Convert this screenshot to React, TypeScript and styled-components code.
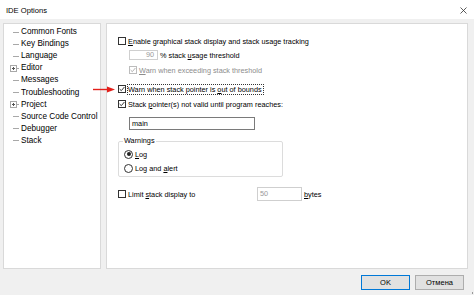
import styled, { createGlobalStyle } from "styled-components";

const GlobalStyle = createGlobalStyle`
  html, body {
    margin: 0;
    padding: 0;
  }
  body {
    background: #f0f0f0;
    font-family: "Liberation Sans", Arial, sans-serif;
    color: #000;
  }
`;

const Window = styled.div`
  position: relative;
  width: 474px;
  height: 295px;
  background: #f0f0f0;
  display: flex;
  flex-direction: column;
  overflow: hidden;
`;

const TitleBar = styled.div`
  height: 19px;
  background: #fff;
  display: flex;
  align-items: center;
  justify-content: space-between;
  padding: 1px 7px 0 6px;
  box-sizing: border-box;
  font-size: 7.6px;
`;

const Body = styled.div`
  display: flex;
  gap: 5px;
  height: 246px;
  margin-top: 4px;
  padding: 0 6px 0 3px;
`;

const Panel = styled.div<{ $width?: number }>`
  ${(p) => (p.$width ? `width: ${p.$width}px; flex: none;` : "flex: 1;")}
  background: #fff;
  border: 1px solid #d9d9d9;
  box-sizing: border-box;
`;

const TreeList = styled.ul`
  list-style: none;
  margin: 0;
  padding: 1.5px 0 0 0;
`;

const TreeItem = styled.li`
  display: flex;
  align-items: center;
  height: 12.1px;
  font-size: 8.2px;
  white-space: nowrap;
`;

const Connector = styled.span`
  position: relative;
  flex: none;
  width: 17px;
  height: 100%;
  &::after {
    content: "";
    position: absolute;
    left: 9px;
    top: 50%;
    width: 6px;
    border-top: 1px solid #a8a8a8;
  }
`;

const Expander = styled.span`
  position: absolute;
  left: 6px;
  top: 50%;
  width: 7px;
  height: 7px;
  margin-top: -3px;
  box-sizing: border-box;
  border: 1px solid #a8a8a8;
  background: #fff;
  z-index: 1;
  &::before,
  &::after {
    content: "";
    position: absolute;
    background: #555;
  }
  &::before {
    left: 1px;
    top: 2px;
    width: 3px;
    height: 1px;
  }
  &::after {
    left: 2px;
    top: 1px;
    width: 1px;
    height: 3px;
  }
`;

const Content = styled.div`
  padding: 12px 0 0 11px;
  display: flex;
  flex-direction: column;
  align-items: flex-start;
`;

const Row = styled.div<{ $top?: number; $indent?: number }>`
  display: flex;
  align-items: center;
  min-height: 10px;
  margin-top: ${(p) => p.$top ?? 0}px;
  margin-left: ${(p) => p.$indent ?? 0}px;
`;

const Box = styled.span<{ $disabled?: boolean }>`
  display: inline-flex;
  align-items: center;
  justify-content: center;
  flex: none;
  width: 8px;
  height: 8px;
  box-sizing: border-box;
  border: 1px solid ${(p) => (p.$disabled ? "#bcbcbc" : "#333")};
  background: #fff;
`;

const Radio = styled.span<{ $checked?: boolean }>`
  position: relative;
  flex: none;
  width: 9px;
  height: 9px;
  box-sizing: border-box;
  border: 1px solid #333;
  border-radius: 50%;
  background: #fff;
  &::after {
    content: "";
    display: ${(p) => (p.$checked ? "block" : "none")};
    position: absolute;
    left: 1.5px;
    top: 1.5px;
    width: 4px;
    height: 4px;
    border-radius: 50%;
    background: #222;
  }
`;

const Label = styled.span<{
  $disabled?: boolean;
  $focused?: boolean;
  $width?: number;
}>`
  font-size: 7.3px;
  line-height: 9px;
  margin-left: 2px;
  white-space: nowrap;
  color: ${(p) => (p.$disabled ? "#8d8d8d" : "#000")};
  ${(p) => p.$focused && "outline: 1px dotted #333; outline-offset: 0; padding-right: 1px;"}
  ${(p) => p.$width && `width: ${p.$width}px; flex: none;`}
`;

const U = styled.span`
  text-decoration: underline;
`;

const TextBox = styled.div<{
  $width: number;
  $height: number;
  $disabled?: boolean;
  $right?: boolean;
}>`
  flex: none;
  width: ${(p) => p.$width}px;
  height: ${(p) => p.$height}px;
  box-sizing: border-box;
  border: 1px solid ${(p) => (p.$disabled ? "#cfcfcf" : "#7a7a7a")};
  background: #fff;
  font-size: 7.3px;
  line-height: ${(p) => p.$height - 2}px;
  padding: 0 3px 0 2px;
  text-align: ${(p) => (p.$right ? "right" : "left")};
  color: ${(p) => (p.$disabled ? "#9a9a9a" : "#000")};
`;

const Group = styled.fieldset`
  width: 165px;
  box-sizing: border-box;
  margin: 6px 0 0 0;
  padding: 3px 0 3px 5px;
  min-width: 0;
  border: 1px solid #dcdcdc;
  border-radius: 2px;
`;

const Legend = styled.legend`
  font-size: 7.3px;
  line-height: 10px;
  padding: 0 1px;
  margin-left: -1px;
`;

const Footer = styled.div`
  display: flex;
  justify-content: flex-end;
  gap: 5px;
  padding: 6px 10px 0 0;
`;

const Button = styled.button<{ $default?: boolean }>`
  width: 49px;
  height: 15px;
  padding: 0;
  box-sizing: border-box;
  background: #e1e1e1;
  border: 1px solid ${(p) => (p.$default ? "#0078d7" : "#adadad")};
  font-family: "Liberation Sans", Arial, sans-serif;
  font-size: 7.5px;
  color: #000;
`;

const Arrow = styled.svg`
  position: absolute;
  left: 93px;
  top: 86px;
`;

const Grip = styled.span`
  position: absolute;
  right: 1px;
  bottom: 1px;
  width: 1px;
  height: 2px;
  background: #999;
`;

function Check({ disabled }: { disabled?: boolean }) {
  return (
    <svg width="6" height="6" viewBox="0 0 6 6">
      <polyline
        points="0.6,3 2.3,4.7 5.4,1"
        fill="none"
        stroke={disabled ? "#a8a8a8" : "#222"}
        strokeWidth="0.9"
      />
    </svg>
  );
}

const treeItems: { name: string; expandable?: boolean }[] = [
  { name: "Common Fonts" },
  { name: "Key Bindings" },
  { name: "Language" },
  { name: "Editor", expandable: true },
  { name: "Messages" },
  { name: "Troubleshooting" },
  { name: "Project", expandable: true },
  { name: "Source Code Control" },
  { name: "Debugger" },
  { name: "Stack" },
];

export default function App() {
  return (
    <Window>
      <GlobalStyle />
      <TitleBar>
        <span>IDE Options</span>
        <svg width="7" height="7" viewBox="0 0 7 7">
          <path d="M0.5 0.5 L6.5 6.5 M6.5 0.5 L0.5 6.5" stroke="#333" strokeWidth="0.8" />
        </svg>
      </TitleBar>

      <Body>
        <Panel $width={98}>
          <TreeList>
            {treeItems.map((item) => (
              <TreeItem key={item.name}>
                <Connector>{item.expandable && <Expander />}</Connector>
                {item.name}
              </TreeItem>
            ))}
          </TreeList>
        </Panel>

        <Panel>
          <Content>
            <Row>
              <Box />
              <Label>
                <U>E</U>nable graphical stack display and stack usage tracking
              </Label>
            </Row>
            <Row $top={4} $indent={11}>
              <TextBox $width={29} $height={10} $disabled $right>
                90
              </TextBox>
              <Label>
                % stack <U>u</U>sage threshold
              </Label>
            </Row>
            <Row $top={5} $indent={11}>
              <Box $disabled>
                <Check disabled />
              </Box>
              <Label $disabled>
                <U>W</U>arn when exceeding stack threshold
              </Label>
            </Row>
            <Row $top={9}>
              <Box>
                <Check />
              </Box>
              <Label $focused>
                Warn when stack pointer is <U>o</U>ut of bounds
              </Label>
            </Row>
            <Row $top={5}>
              <Box>
                <Check />
              </Box>
              <Label>
                Stack <U>p</U>ointer(s) not valid until program reaches:
              </Label>
            </Row>
            <Row $top={8} $indent={11}>
              <TextBox $width={126} $height={13}>
                main
              </TextBox>
            </Row>

            <Group>
              <Legend>Warnings</Legend>
              <Row>
                <Radio $checked />
                <Label>
                  <U>L</U>og
                </Label>
              </Row>
              <Row $top={4}>
                <Radio />
                <Label>
                  Log and <U>a</U>lert
                </Label>
              </Row>
            </Group>

            <Row $top={10}>
              <Box />
              <Label $width={129}>
                Limit <U>s</U>tack display to
              </Label>
              <TextBox $width={45} $height={14} $disabled>
                50
              </TextBox>
              <Label>
                <U>b</U>ytes
              </Label>
            </Row>
          </Content>
        </Panel>
      </Body>

      <Footer>
        <Button $default>OK</Button>
        <Button>Отмена</Button>
      </Footer>

      <Arrow width="22" height="7" viewBox="0 0 22 7">
        <line x1="0" y1="3.5" x2="16" y2="3.5" stroke="#e3201b" strokeWidth="1.4" />
        <polygon points="14,0.4 22,3.5 14,6.6" fill="#e3201b" />
      </Arrow>
      <Grip />
    </Window>
  );
}
